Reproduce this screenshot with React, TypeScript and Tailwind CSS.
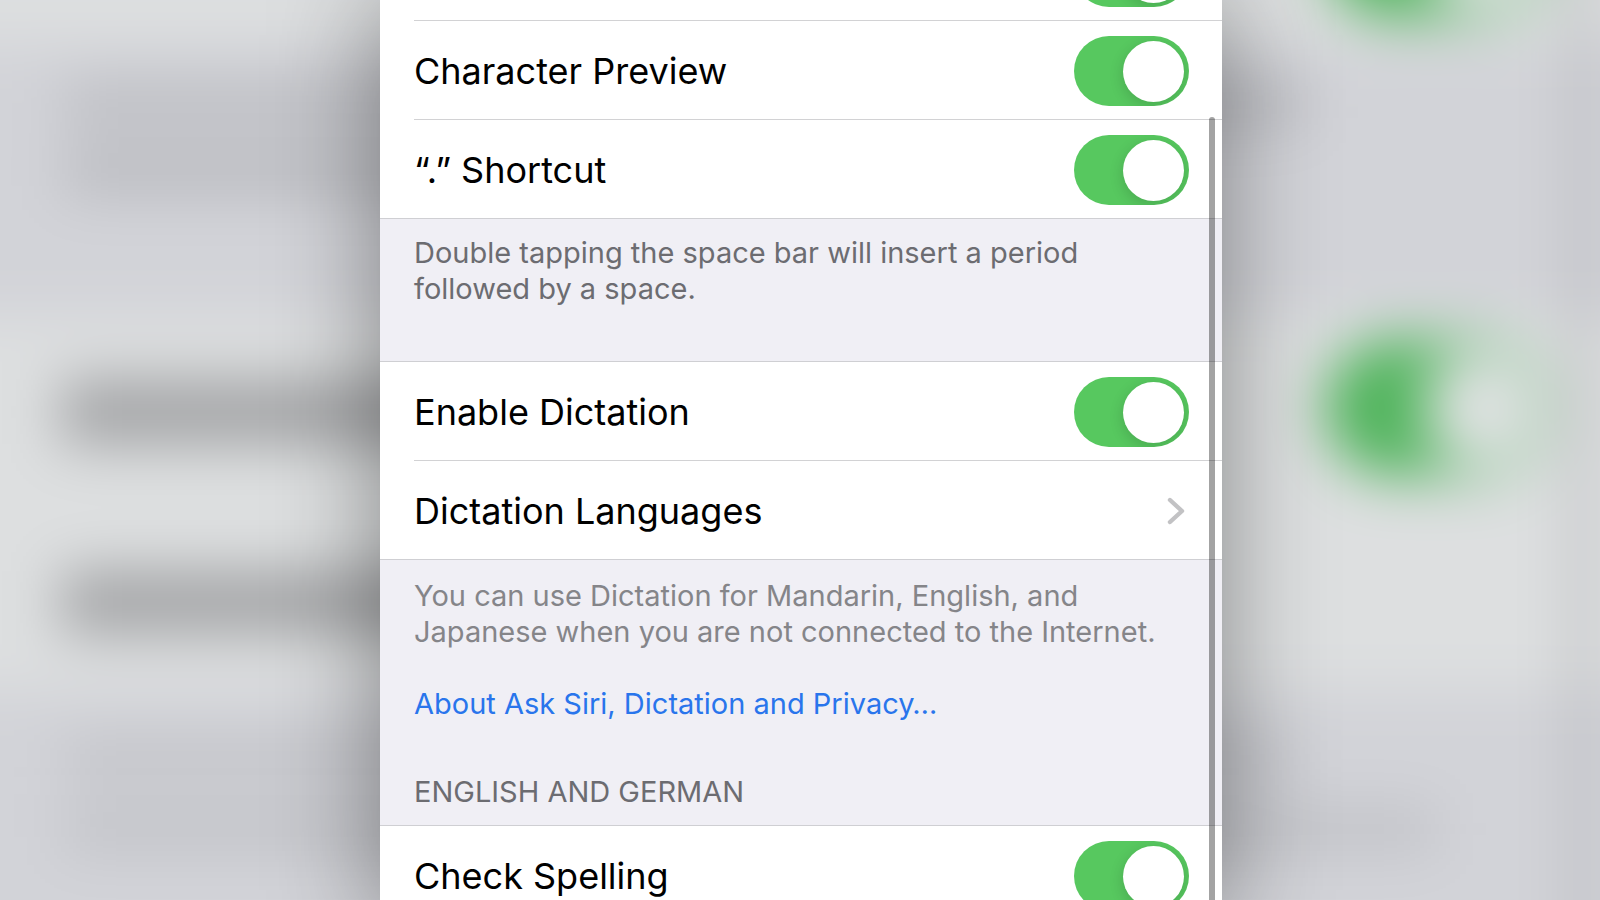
import type { ReactNode } from "react";

function Toggle({ label, id }: { label?: string; id: string }) {
  return (
    <span className="relative inline-flex h-[70px] w-[115px] shrink-0">
      <input
        id={id}
        type="checkbox"
        role="switch"
        defaultChecked
        aria-label={label}
        className="peer h-full w-full cursor-pointer appearance-none rounded-full bg-[#d9d9de] checked:bg-[#57c85f]"
      />
      <span className="pointer-events-none absolute inset-0 overflow-hidden rounded-full peer-checked:[&>span]:translate-x-11">
        <span className="absolute top-[5px] left-[5px] size-[61px] rounded-full bg-white shadow-[0_4px_14px_1px_rgba(0,0,0,0.14)]" />
      </span>
    </span>
  );
}

function Row({ children, last = false }: { children: ReactNode; last?: boolean }) {
  return (
    <div className={last ? "border-b border-[#cfcfd3] pl-[34px]" : "pl-[34px]"}>
      <div
        className={
          last
            ? "flex h-[98px] items-center justify-between pt-0.5 pr-[33px]"
            : "flex h-[99px] items-center justify-between border-b border-[#d2d2d4] pt-0.5 pr-[33px]"
        }
      >
        {children}
      </div>
    </div>
  );
}

function SwitchRow({ id, label, last }: { id: string; label: string; last?: boolean }) {
  return (
    <Row last={last}>
      <label htmlFor={id} className="text-[36px] leading-[48px]">
        {label}
      </label>
      <Toggle id={id} />
    </Row>
  );
}

/* Enlarged, out-of-focus echo of the settings list that fills the window. */
function Backdrop() {
  return (
    <svg
      aria-hidden="true"
      className="absolute inset-0 h-full w-full"
      viewBox="0 0 1600 900"
      preserveAspectRatio="xMidYMid slice"
    >
      <defs>
        <filter
          id="soft"
          x="-200"
          y="-200"
          width="2000"
          height="1300"
          filterUnits="userSpaceOnUse"
          colorInterpolationFilters="sRGB"
        >
          <feGaussianBlur stdDeviation="28" />
        </filter>
      </defs>
      <rect width="1600" height="900" fill="#d3d4d8" />
      <g filter="url(#soft)">
        <rect x="-200" y="-200" width="2000" height="243" fill="#dddfe0" />
        <rect x="-200" y="43" width="2000" height="273" fill="#d2d3d8" />
        <rect x="-200" y="316" width="2000" height="374" fill="#dddfe0" />
        <rect x="-200" y="690" width="2000" height="500" fill="#d2d3d8" />
        <rect x="65" y="83" width="1240" height="42" fill="#bbbcc1" />
        <rect x="65" y="150" width="520" height="42" fill="#b7b8bd" />
        <rect x="62" y="380" width="520" height="64" fill="#a2a3a5" />
        <rect x="62" y="571" width="660" height="62" fill="#a2a3a5" />
        <rect x="65" y="742" width="1225" height="34" fill="#bfc0c5" />
        <rect x="65" y="810" width="1370" height="38" fill="#bfc0c5" />
        <rect x="1325" y="-115" width="222" height="133" rx="66" fill="#4fb45b" />
        <circle cx="1482" cy="-49" r="56" fill="#e0e2e3" />
        <rect x="1325" y="339" width="222" height="137" rx="68" fill="#4fb45b" />
        <circle cx="1482" cy="408" r="58" fill="#e0e2e3" />
        <rect x="1576" y="-150" width="12" height="1250" fill="#a4a5a8" />
      </g>
    </svg>
  );
}

export default function App() {
  return (
    <div className="relative h-screen overflow-hidden bg-[#d3d4d8] font-[Inter,'Liberation_Sans',sans-serif] text-black">
      <Backdrop />
      <div className="relative grid h-full grid-cols-[380fr_842fr_378fr]">
        <main className="relative col-start-2 h-full bg-white shadow-[0_0_100px_rgba(0,0,0,0.4)]">
          <div className="h-full overflow-hidden">
            <section className="-mt-[78px]">
              <Row>
                <span />
                <Toggle id="caps-lock" label="Enable Caps Lock" />
              </Row>
              <SwitchRow id="character-preview" label="Character Preview" />
              <SwitchRow id="shortcut" label="“.” Shortcut" last />
            </section>

            <div className="h-[143px] border-b border-[#cfcfd3] bg-[#f0eff5] px-[34px] pt-4">
              <p className="text-[29px] leading-9 text-[#6c6c71]">
                Double tapping the space bar will insert a period
                <br />
                followed by a space.
              </p>
            </div>

            <section>
              <SwitchRow id="dictation" label="Enable Dictation" />
              <Row last>
                <button type="button" className="flex flex-1 items-center justify-between text-left text-[36px] leading-[48px]">
                  Dictation Languages
                  <svg aria-hidden="true" className="mr-1 h-7 w-[18px]" viewBox="0 0 18 28" fill="none">
                    <path d="M3 3 L15 14 L3 25" stroke="#c2c2c4" strokeWidth="4.4" strokeLinecap="round" strokeLinejoin="round" />
                  </svg>
                </button>
              </Row>
            </section>

            <div className="border-b border-[#cfcfd3] bg-[#f0eff5] px-[34px] pt-[18px] pb-[15px] text-[29px] leading-9">
              <p className="text-[#858589]">
                You can use Dictation for Mandarin, English, and
                <br />
                Japanese when you are not connected to the Internet.
              </p>
              <a href="#privacy" className="mt-9 block text-[#2975ec]">
                About Ask Siri, Dictation and Privacy…
              </a>
              <h2 className="mt-[52px] text-[#6c6c71]">ENGLISH AND GERMAN</h2>
            </div>

            <section>
              <SwitchRow id="spelling" label="Check Spelling" />
            </section>
          </div>

          <div aria-hidden="true" className="absolute top-[117px] right-[7px] bottom-0 w-[6px] rounded-t-full bg-black/36" />
        </main>
      </div>
    </div>
  );
}
